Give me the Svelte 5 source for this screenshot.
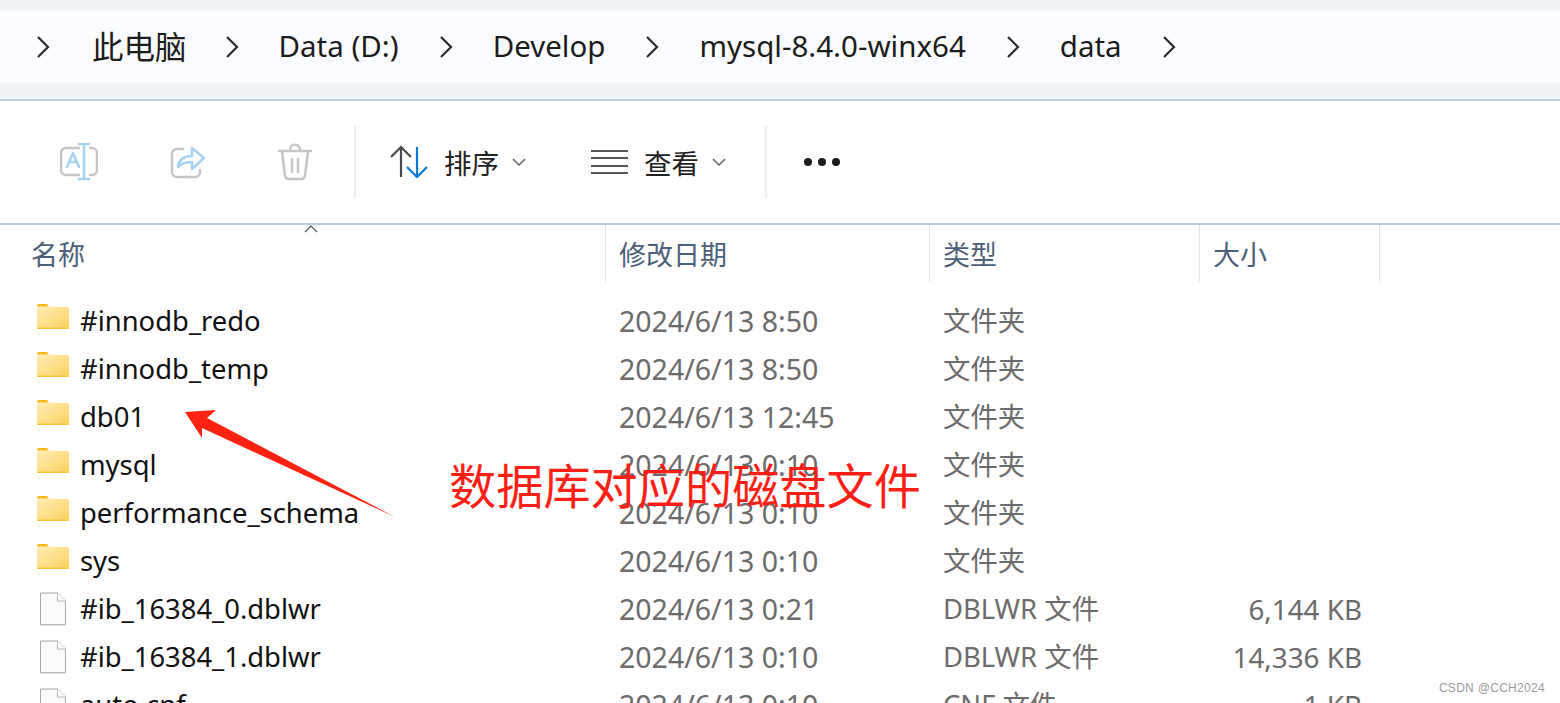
<script lang="ts">
	const crumbs = ['此电脑', 'Data (D:)', 'Develop', 'mysql-8.4.0-winx64', 'data'];

	const rows = [
		{ name: '#innodb_redo', date: '2024/6/13 8:50', type: '文件夹', size: '', folder: true },
		{ name: '#innodb_temp', date: '2024/6/13 8:50', type: '文件夹', size: '', folder: true },
		{ name: 'db01', date: '2024/6/13 12:45', type: '文件夹', size: '', folder: true },
		{ name: 'mysql', date: '2024/6/13 0:10', type: '文件夹', size: '', folder: true },
		{ name: 'performance_schema', date: '2024/6/13 0:10', type: '文件夹', size: '', folder: true },
		{ name: 'sys', date: '2024/6/13 0:10', type: '文件夹', size: '', folder: true },
		{ name: '#ib_16384_0.dblwr', date: '2024/6/13 0:21', type: 'DBLWR 文件', size: '6,144 KB', folder: false },
		{ name: '#ib_16384_1.dblwr', date: '2024/6/13 0:10', type: 'DBLWR 文件', size: '14,336 KB', folder: false },
		{ name: 'auto.cnf', date: '2024/6/13 0:10', type: 'CNF 文件', size: '1 KB', folder: false }
	];
</script>

<div class="window">
	<nav class="crumbs">
		{#each crumbs as crumb}
			<svg class="chev" viewBox="0 0 14 24"><path d="M2 2l10 10L2 22" /></svg>
			<span class:cjk={crumb === '此电脑'}>{crumb}</span>
		{/each}
		<svg class="chev" viewBox="0 0 14 24"><path d="M2 2l10 10L2 22" /></svg>
	</nav>

	<div class="toolbar">
		<div class="group disabled">
			<svg class="tool rename" viewBox="0 0 38 38">
				<path class="grey" d="M19 5H6a5 5 0 0 0-5 5v17a5 5 0 0 0 5 5h13M30 5h2a5 5 0 0 1 5 5v17a5 5 0 0 1-5 5h-2" />
				<path class="blue" d="M24 1v35M19 1h10M19 36h10M7 24l6-14 6 14M9 19h8" />
			</svg>
			<svg class="tool share" viewBox="0 0 36 34">
				<path class="grey" d="M13 4H7a5 5 0 0 0-5 5v18a5 5 0 0 0 5 5h18a5 5 0 0 0 5-5v-2" />
				<path class="blue" d="M8 22c1-8 7-11 14-11V3l12 10-12 11v-7c-6 0-10 1-14 5z" />
			</svg>
			<svg class="tool trash" viewBox="0 0 34 38">
				<path class="grey" d="M1 8h32M12 7c0-7 10-7 10 0M4 8l3 25a4 4 0 0 0 4 3h12a4 4 0 0 0 4-3l3-25M14 16v13M20 16v13" />
			</svg>
		</div>
		<div class="sep"></div>
		<div class="group sort">
			<svg class="sort-icon" viewBox="0 0 38 34">
				<path class="dark" d="M11 32V2M1 12 11 2l10 10" />
				<path class="accent" d="M27 2v30M17 22l10 10 10-10" />
			</svg>
			<span class="label">排序</span>
			<svg class="down" viewBox="0 0 14 8"><path d="M1 1l6 6 6-6" /></svg>
		</div>
		<div class="group view">
			<div class="lines"><i></i><i></i><i></i><i></i></div>
			<span class="label">查看</span>
			<svg class="down" viewBox="0 0 14 8"><path d="M1 1l6 6 6-6" /></svg>
		</div>
		<div class="sep last"></div>
		<div class="dots"><i></i><i></i><i></i></div>
	</div>

	<div class="head">
		<svg class="sort-caret" viewBox="0 0 14 8"><path d="M1 7l6-6 6 6" /></svg>
		<div class="th name-col">名称</div>
		<div class="th date-col">修改日期</div>
		<div class="th type-col">类型</div>
		<div class="th size-col">大小</div>
	</div>

	<div class="rows">
		{#each rows as row}
			<div class="row">
				<div class="cell name-col">
					{#if row.folder}
						<svg class="icon" width="32" height="25" viewBox="0 0 32 25">
							<defs>
								<linearGradient id="fold" x1="0" y1="0" x2="1" y2="1">
									<stop offset="0" stop-color="#ffeeb5" />
									<stop offset="1" stop-color="#fdcf5e" />
								</linearGradient>
							</defs>
							<path d="M0 2q0-2 2-2h7q2 0 3 2.500H0z" fill="#fdb515" />
							<rect x="0" y="3" width="32" height="22" rx="1.500" fill="url(#fold)" />
							<rect x="0" y="23.500" width="32" height="1.500" rx="0.700" fill="#f9bf3c" />
						</svg>
					{:else}
						<svg class="icon file" width="32" height="34" viewBox="0 0 32 34">
							<path d="M3.500 1h17l8 8v23.500h-25z" fill="#fbfbfb" stroke="#a8a8a8" />
							<path d="M20.500 1v8h8" fill="#fff" stroke="#b5b5b5" />
							<path d="M3.500 33h25" stroke="#c8c8c8" />
						</svg>
					{/if}
					<span class="file-name">{row.name}</span>
				</div>
				<div class="cell date-col muted">{row.date}</div>
				<div class="cell type-col muted">{row.type}</div>
				<div class="cell size-col muted num">{row.size}</div>
			</div>
		{/each}
	</div>

	<svg class="arrow" width="240" height="135" viewBox="0 0 240 135">
		<path d="M15 17 46 15 37 23 225 122 32 33 32 43z" fill="#ff2212" />
	</svg>
	<div class="note">数据库对应的磁盘文件</div>
	<div class="mark">CSDN @CCH2024</div>
</div>

<style>
	:global(body) {
		background: #fff;
	}
	.window {
		position: relative;
		height: 703px;
		overflow: hidden;
		background: #fff;
		font-family: 'Noto Sans', 'Open Sans', 'Noto Sans CJK SC', sans-serif;
		color: #1a1a1a;
	}
	.crumbs {
		height: 72px;
		border-top: 11px solid #eff4f9;
		border-bottom: 16px solid #eff4f9;
		background: #fafcff;
		display: flex;
		align-items: center;
		gap: 40px;
		padding-left: 36px;
		font-size: 29.500px;
		color: #1c1c1c;
	}
	.crumbs span {
		white-space: nowrap;
		padding-bottom: 4px;
	}
	.crumbs .chev:first-child {
		margin-right: 2px;
	}
	.crumbs .cjk {
		font-size: 31.500px;
		margin-right: -2px;
		font-family: 'Noto Sans CJK SC', sans-serif;
	}
	.chev {
		width: 14px;
		height: 24px;
		flex: none;
		fill: none;
		stroke: #2b2b2b;
		stroke-width: 2.200;
	}
	.toolbar {
		height: 122px;
		border-top: 2px solid #bccfdf;
		border-bottom: 2px solid #bccfdf;
		display: flex;
		align-items: center;
		padding-left: 60px;
	}
	.group {
		display: flex;
		align-items: center;
	}
	.tool {
		flex: none;
		fill: none;
		stroke-width: 2.500;
		stroke-linecap: round;
		stroke-linejoin: round;
	}
	.rename {
		width: 38px;
		height: 38px;
	}
	.share {
		width: 36px;
		height: 34px;
		margin-left: 72px;
	}
	.trash {
		width: 34px;
		height: 38px;
		margin-left: 72px;
	}
	.grey {
		stroke: #c6c6c6;
	}
	.blue {
		stroke: #a6d2f2;
	}
	.sep {
		width: 2px;
		height: 72px;
		background: #eeeeee;
		margin-left: 42px;
		margin-right: 34px;
	}
	.sep.last {
		margin-left: 39px;
		margin-right: 37px;
	}
	.sort-icon {
		width: 38px;
		height: 34px;
		fill: none;
		stroke-width: 2.200;
	}
	.dark {
		stroke: #4a4a4a;
	}
	.accent {
		stroke: #0a78d4;
	}
	.label {
		font-family: 'Noto Sans CJK SC', sans-serif;
		font-size: 27.500px;
		margin-left: 16px;
		color: #222;
	}
	.down {
		width: 14px;
		height: 8px;
		margin-left: 13px;
		fill: none;
		stroke: #666;
		stroke-width: 1.500;
	}
	.view {
		margin-left: 65px;
	}
	.lines {
		width: 37px;
		height: 25px;
		display: flex;
		flex-direction: column;
		justify-content: space-between;
	}
	.lines i {
		display: block;
		height: 2px;
		background: #555;
	}
	.dots {
		display: flex;
		gap: 6px;
	}
	.dots i {
		width: 8px;
		height: 8px;
		border-radius: 50%;
		background: #1c1c1c;
	}
	.head {
		position: relative;
		display: flex;
		height: 57px;
		font-family: 'Noto Sans CJK SC', sans-serif;
		font-size: 27px;
		color: #4c607a;
	}
	.sort-caret {
		position: absolute;
		left: 304px;
		top: 0;
		width: 14px;
		height: 8px;
		fill: none;
		stroke: #555;
		stroke-width: 1.200;
	}
	.th {
		display: flex;
		align-items: center;
		padding-left: 13px;
		border-right: 1px solid #e5e5e5;
		box-sizing: border-box;
	}
	.th.name-col {
		padding-left: 31px;
	}
	.name-col {
		width: 606px;
	}
	.date-col {
		width: 324px;
	}
	.type-col {
		width: 270px;
	}
	.size-col {
		width: 180px;
	}
	.rows {
		padding-top: 15px;
	}
	.row {
		display: flex;
		height: 48px;
		align-items: center;
		white-space: nowrap;
	}
	.cell {
		box-sizing: border-box;
		padding-left: 13px;
		padding-bottom: 1px;
		font-size: 28.500px;
	}
	.cell.name-col {
		display: flex;
		align-items: center;
		padding-left: 37px;
		font-size: 27.400px;
		color: #111;
	}
	.cell.type-col {
		font-size: 27.400px;
		padding-bottom: 4px;
	}
	.cell.size-col {
		font-size: 27.800px;
	}
	.icon {
		flex: none;
		margin-right: 11px;
		margin-top: -8px;
	}
	.icon.file {
		margin-top: 0;
	}
	.muted {
		color: #6b6b6b;
		font-family: 'Noto Sans', 'Noto Sans CJK SC', sans-serif;
	}
	.num {
		text-align: right;
		padding-left: 0;
		padding-right: 18px;
	}
	.arrow {
		position: absolute;
		left: 170px;
		top: 395px;
	}
	.note {
		position: absolute;
		left: 449px;
		top: 450px;
		font-family: 'Noto Sans CJK SC', sans-serif;
		font-size: 47.200px;
		line-height: 68px;
		color: #ff1f17;
		white-space: nowrap;
	}
	.mark {
		position: absolute;
		right: 15px;
		top: 681px;
		font-family: 'Liberation Sans', sans-serif;
		font-size: 12px;
		letter-spacing: 0.300px;
		color: #9a9a9a;
	}
</style>
